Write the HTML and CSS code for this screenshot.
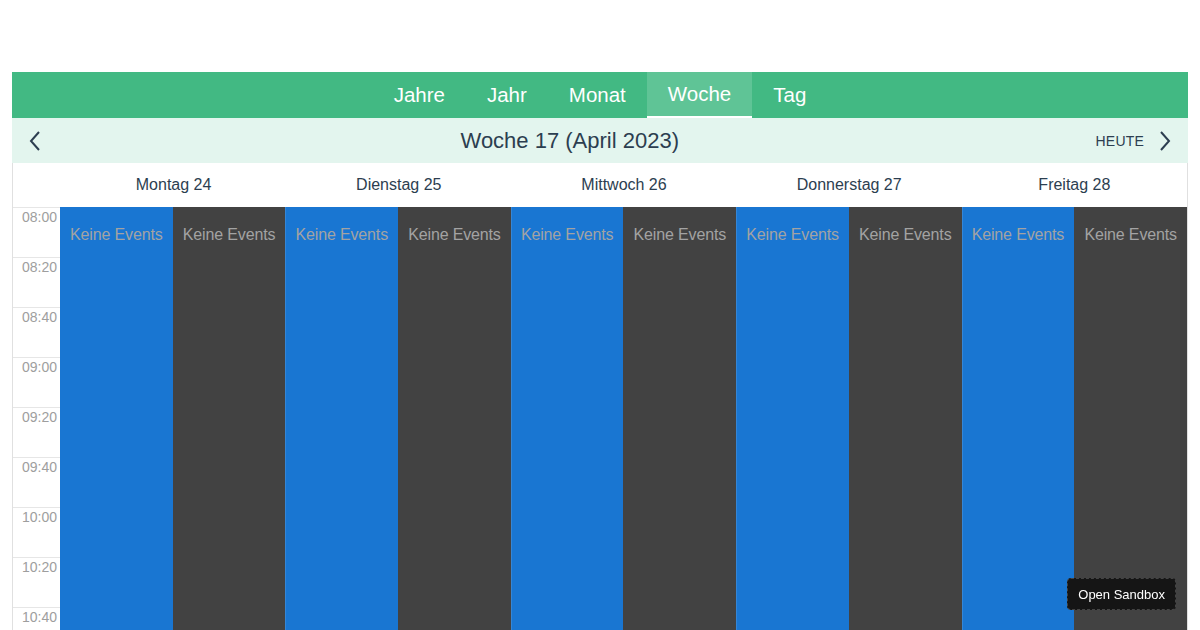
FILE: index.html
```html
<!DOCTYPE html>
<html lang="de">
<head>
<meta charset="utf-8">
<title>Kalender</title>
<link rel="stylesheet" href="styles.css">
</head>
<body>
<div class="cal">
  <div class="tabs">
    <div class="tab">Jahre</div>
    <div class="tab">Jahr</div>
    <div class="tab">Monat</div>
    <div class="tab active">Woche</div>
    <div class="tab">Tag</div>
  </div>
  <div class="nav">
    <button class="arrow prev" aria-label="Zurück">
      <svg width="14" height="20" viewBox="0 0 14 20"><path d="M11 1 L3 10 L11 19" fill="none" stroke="#2c3e50" stroke-width="2"/></svg>
    </button>
    <div class="title">Woche 17 (April 2023)</div>
    <button class="today">Heute</button>
    <button class="arrow next" aria-label="Weiter">
      <svg width="14" height="20" viewBox="0 0 14 20"><path d="M3 1 L11 10 L3 19" fill="none" stroke="#2c3e50" stroke-width="2"/></svg>
    </button>
  </div>
  <div class="head">
    <div class="corner"></div>
    <div class="dayname">Montag 24</div>
    <div class="dayname">Dienstag 25</div>
    <div class="dayname">Mittwoch 26</div>
    <div class="dayname">Donnerstag 27</div>
    <div class="dayname">Freitag 28</div>
  </div>
  <div class="body">
    <div class="times">
      <div class="slot">08:00</div>
      <div class="slot">08:20</div>
      <div class="slot">08:40</div>
      <div class="slot">09:00</div>
      <div class="slot">09:20</div>
      <div class="slot">09:40</div>
      <div class="slot">10:00</div>
      <div class="slot">10:20</div>
      <div class="slot">10:40</div>
      <div class="slot">11:00</div>
    </div>
    <div class="day"><div class="half blue">Keine Events</div><div class="half dark">Keine Events</div></div>
    <div class="day"><div class="half blue">Keine Events</div><div class="half dark">Keine Events</div></div>
    <div class="day"><div class="half blue">Keine Events</div><div class="half dark">Keine Events</div></div>
    <div class="day"><div class="half blue">Keine Events</div><div class="half dark">Keine Events</div></div>
    <div class="day"><div class="half blue">Keine Events</div><div class="half dark">Keine Events</div></div>
  </div>
</div>
<button class="sandbox">Open Sandbox</button>
</body>
</html>
```
FILE: styles.css
```css
html, body {
  margin: 0;
  padding: 0;
  background: #fff;
  font-family: "Liberation Sans", Arial, sans-serif;
  color: #2c3e50;
  overflow: hidden;
}
.cal {
  margin: 72px 12px 0;
}
.tabs {
  height: 46px;
  background: #42b983;
  display: flex;
  justify-content: center;
}
.tab {
  padding: 0 21px;
  font-size: 20.5px;
  line-height: 46px;
  color: #fff;
}
.tab.active {
  background: #5fc496;
  line-height: 44px;
  border-bottom: 2px solid #fff;
}
.nav {
  height: 45px;
  background: #e3f5ee;
  display: flex;
  align-items: center;
}
.arrow {
  border: 0;
  background: none;
  padding: 0;
  width: 46px;
  height: 45px;
  display: flex;
  align-items: center;
  justify-content: center;
  cursor: pointer;
}
.title {
  flex: 1;
  text-align: center;
  font-size: 22px;
  padding-right: 14px;
}
.today {
  border: 0;
  background: none;
  padding: 0;
  margin-right: -2px;
  font-family: inherit;
  font-size: 14px;
  text-transform: uppercase;
  color: #2c3e50;
  letter-spacing: 0.2px;
}
.head {
  display: grid;
  grid-template-columns: 48px repeat(5, 1fr);
  height: 44px;
  border-left: 1px solid #e0e0e0;
  border-right: 1px solid #e0e0e0;
  box-sizing: border-box;
}
.dayname {
  font-size: 16px;
  line-height: 44px;
  text-align: center;
}
.body {
  display: grid;
  grid-template-columns: 47px repeat(5, 1fr);
  border-left: 1px solid #e0e0e0;
  border-right: 1px solid #e0e0e0;
  box-sizing: border-box;
}
.times {
  display: flex;
  flex-direction: column;
}
.slot {
  height: 50px;
  box-sizing: border-box;
  border-top: 1px solid #e6e6e6;
  font-size: 14px;
  color: #9e9e9e;
  text-align: right;
  padding: 1px 3px 0 0;
}
.day {
  display: grid;
  grid-template-columns: 1fr 1fr;
}
.half {
  font-size: 16px;
  letter-spacing: -0.15px;
  color: #a3a3a3;
  text-align: center;
  padding-top: 19px;
  white-space: nowrap;
}
.blue { background: #1976d2; }
.dark { background: #424242; }
.day + .day .blue { box-shadow: inset 1px 0 0 rgba(255,255,255,0.12); }
.sandbox {
  position: fixed;
  right: 24px;
  bottom: 20px;
  height: 32px;
  padding: 0 10px;
  background: #151515;
  color: #fff;
  border: 1px dashed #444;
  border-radius: 4px;
  font-family: "Liberation Sans", Arial, sans-serif;
  font-size: 13px;
}
```
